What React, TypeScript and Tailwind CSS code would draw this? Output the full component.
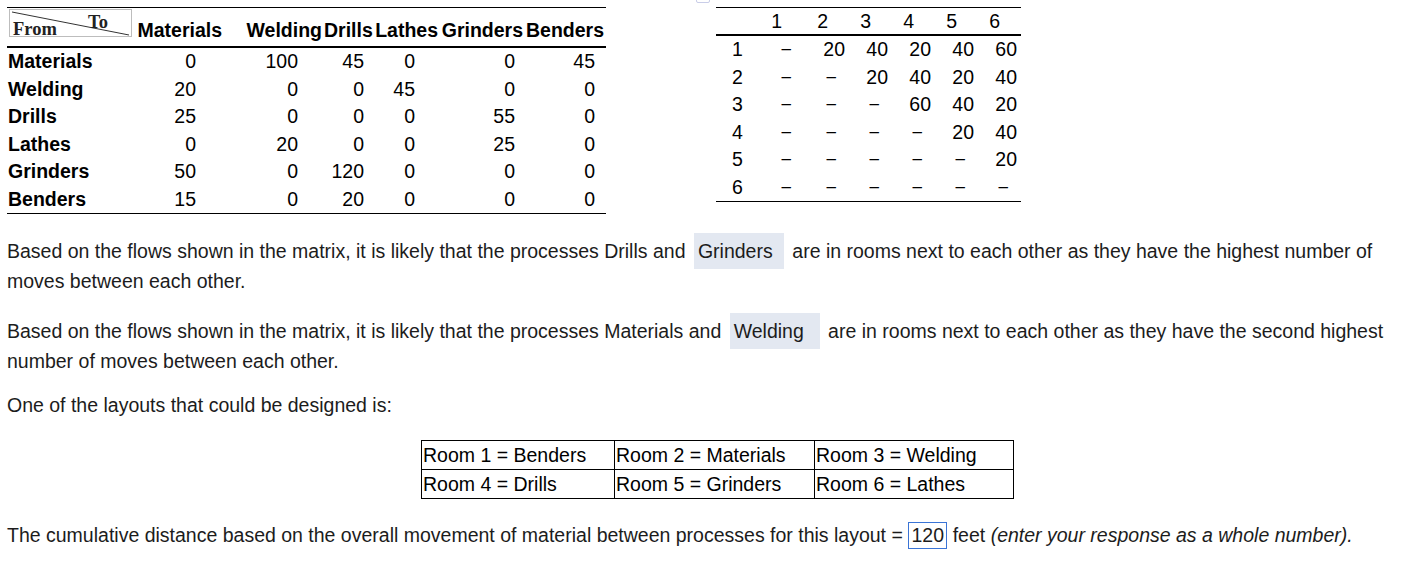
const flows: [string, number[]][] = [
  ["Materials", [0, 100, 45, 0, 0, 45]],
  ["Welding", [20, 0, 0, 45, 0, 0]],
  ["Drills", [25, 0, 0, 0, 55, 0]],
  ["Lathes", [0, 20, 0, 0, 25, 0]],
  ["Grinders", [50, 0, 120, 0, 0, 0]],
  ["Benders", [15, 0, 20, 0, 0, 0]],
];

const depts = ["Materials", "Welding", "Drills", "Lathes", "Grinders", "Benders"];
const valPad = ["pr-[28px]", "pr-[26px]", "pr-[10px]", "pr-[25px]", "pr-[10px]", "pr-[11px]"];

const distances: (number | null)[][] = [
  [null, 20, 40, 20, 40, 60],
  [null, null, 20, 40, 20, 40],
  [null, null, null, 60, 40, 20],
  [null, null, null, null, 20, 40],
  [null, null, null, null, null, 20],
  [null, null, null, null, null, null],
];

const rooms = [
  "Room 1 = Benders",
  "Room 2 = Materials",
  "Room 3 = Welding",
  "Room 4 = Drills",
  "Room 5 = Grinders",
  "Room 6 = Lathes",
];

function FromTo() {
  return (
    <div className="relative ml-[2px] mt-[1px] h-[28px] w-[123px] self-start border border-[#bdbdbd] bg-white">
      <svg className="absolute inset-0" width="121" height="26" viewBox="0 0 121 26">
        <line x1="2" y1="2" x2="119" y2="25" stroke="#333" strokeWidth="1" />
      </svg>
      <span className="absolute left-[3px] top-[10px] font-['Liberation_Serif',serif] text-[18.5px] font-bold leading-[18.5px] text-[#222]">
        From
      </span>
      <span className="absolute left-[78px] top-[3px] font-['Liberation_Serif',serif] text-[18.5px] font-bold leading-[18.5px] text-[#222]">
        To
      </span>
    </div>
  );
}

function FlowTable() {
  return (
    <div className="w-[599px] border-y border-black text-black">
      <div className="grid h-[40px] grid-cols-[128px_89px_100px_50px_66px_85px_81px] items-end border-b-2 border-black">
        <FromTo />
        {depts.map((d) => (
          <div key={d} className="pb-[5.5px] pr-[2px] text-right font-bold leading-[21px]">
            {d}
          </div>
        ))}
      </div>
      {flows.map(([name, vals]) => (
        <div key={name} className="grid grid-cols-[128px_89px_100px_50px_66px_85px_81px] leading-[27.5px]">
          <div className="pl-[1px] font-bold">{name}</div>
          {vals.map((v, i) => (
            <div key={i} className={`text-right ${valPad[i]}`}>
              {v}
            </div>
          ))}
        </div>
      ))}
    </div>
  );
}

function DistanceTable() {
  return (
    <div className="w-[305px] border-y border-black text-black">
      <div className="grid h-[28px] grid-cols-[47px_repeat(6,43px)] border-b-2 border-black leading-[26px]">
        <div />
        {[1, 2, 3, 4, 5, 6].map((n) => (
          <div key={n} className={`text-right ${n === 1 ? "pr-[24px]" : "pr-[21px]"}`}>
            {n}
          </div>
        ))}
      </div>
      {distances.map((row, r) => (
        <div key={r} className="grid h-[27.5px] grid-cols-[47px_repeat(6,43px)] leading-[27.5px]">
          <div className="pr-[4px] text-center">{r + 1}</div>
          {row.map((v, c) =>
            v === null ? (
              <div key={c} className={`text-right ${c === 0 ? "pr-[15px]" : "pr-[13px]"}`}>
                <span className="align-[2px] text-[17px] leading-none">–</span>
              </div>
            ) : (
              <div key={c} className="pr-[4px] text-right">
                {v}
              </div>
            )
          )}
        </div>
      ))}
    </div>
  );
}

function Answer({ children }: { children: string }) {
  return (
    <span className="-my-[3px] ml-[3px] mr-[3px] inline-block h-[36px] w-[90px] bg-[#e3e8f1] pl-[4px] align-baseline leading-[36px]">
      {children}
    </span>
  );
}

export default function App() {
  return (
    <div className="relative min-h-[570px] bg-white px-[7px] pt-[7px] font-['Liberation_Sans',Arial,sans-serif] text-[19.5px] text-[#1c1c1c]">
      <div className="absolute left-[696px] top-[-12px] h-[15px] w-[14px] rounded-[2px] border border-[#c9cde8] bg-white" />

      <div className="flex items-start gap-[110px]">
        <FlowTable />
        <DistanceTable />
      </div>

      <p className="mt-[22px] leading-[30px]">
        Based on the flows shown in the matrix, it is likely that the processes Drills and{" "}
        <Answer>Grinders</Answer>{" "}
        are in rooms next to each other as they have the highest number of moves between each other.
      </p>

      <p className="mt-[20px] leading-[30px]">
        Based on the flows shown in the matrix, it is likely that the processes Materials and{" "}
        <Answer>Welding</Answer>{" "}
        are in rooms next to each other as they have the second highest number of moves between each other.
      </p>

      <p className="mt-[14px] leading-[30px]">One of the layouts that could be designed is:</p>

      <div className="ml-[414px] mt-[20px] grid w-[593px] grid-cols-[193px_200px_199px] border-l border-t border-black leading-[28px] text-black">
        {rooms.map((r) => (
          <div key={r} className="border-b border-r border-black pl-[1px]">
            {r}
          </div>
        ))}
      </div>

      <p className="mt-[21px] leading-[30px]">
        The cumulative distance based on the overall movement of material between processes for this layout ={" "}
        <span className="inline-block h-[27px] w-[39px] border border-[#3a74d6] text-center align-baseline leading-[25px]">
          120
        </span>{" "}
        feet <em>(enter your response as a whole number).</em>
      </p>
    </div>
  );
}
